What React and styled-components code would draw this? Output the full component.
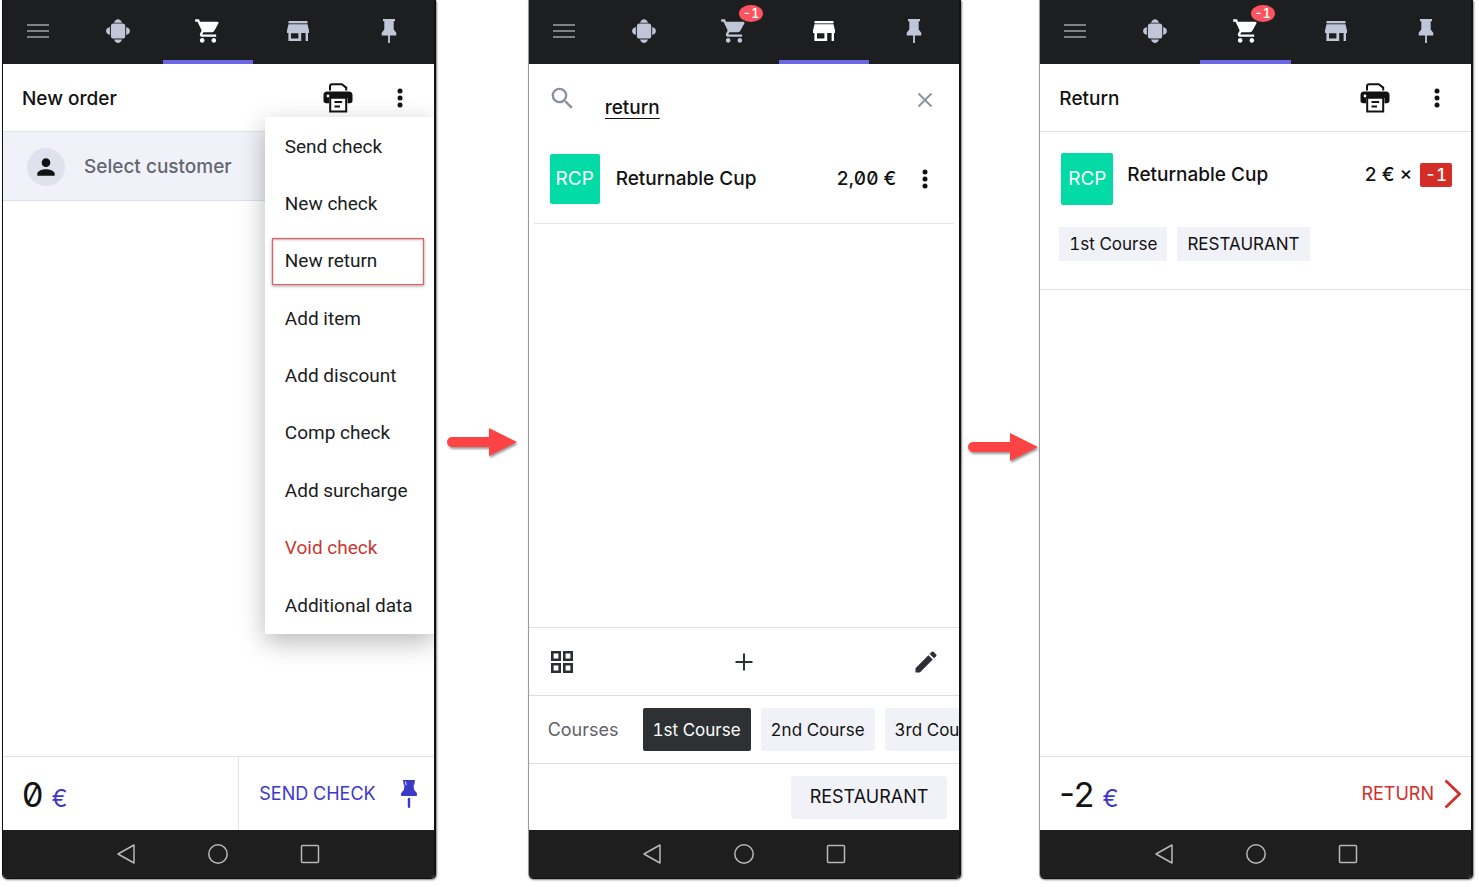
import React from 'react';
import styled, { createGlobalStyle, css } from 'styled-components'
import { MdShoppingCart, MdPerson, MdSearch, MdEdit } from 'react-icons/md'

const GlobalStyle = createGlobalStyle`
    * {
        box-sizing: border-box;
    }
    body {
        margin: 0;
        background: #fff;
        color: #121212;
        font-family: Inter, "Liberation Sans", sans-serif;
        font-size: 19px;
        font-weight: 500;
        line-height: 24px;
        font-feature-settings: "zero", "tnum";
    }
    button, input {
        font: inherit;
        font-feature-settings: inherit;
        color: inherit;
        border: 0;
        padding: 0;
        background: none;
    }
`

/* ---------- icons ---------- */

const TableIcon = () => (
    <svg width="24" height="24" viewBox="0 0 24 24" fill="currentColor" aria-hidden="true">
        <rect x="4.900" y="4.600" width="14.300" height="15" rx="2.600" />
        <path d="M8 3.700C8.800 1.400 10.200.2 12 .2s3.200 1.200 4 3.500z" />
        <path d="M8 20.500c.8 2.300 2.200 3.400 4 3.400s3.200-1.100 4-3.400z" />
        <path d="M3.900 8C1.300 8.700.1 10.200.1 12s1.200 3.300 3.800 4z" />
        <path d="M20.200 8c2.500.7 3.700 2.200 3.700 4s-1.200 3.300-3.700 4z" />
    </svg>
)

const StoreIcon = () => (
    <svg width="22" height="20" viewBox="0 0 22 20" fill="currentColor" aria-hidden="true">
        <path d="M1.500 0h19v2.400h-19z" />
        <path fillRule="evenodd" d="M1.500 3.200h19L22 9.500v2.500h-1v8h-2.400v-8h-4.400v8H1.400v-8H0V9.500zM4 12.200v5.200h7.400v-5.200z" />
    </svg>
)

const PinIcon = () => (
    <svg width="16" height="24" viewBox="0 0 16 24" fill="currentColor" aria-hidden="true">
        <path d="M2 0h12v2.200h-1.300v8.300l2.600 3.200v2.700H8.900V24H7.100v-7.600H.7v-2.700l2.600-3.200V2.200H2z" />
    </svg>
)

const SendPinIcon = () => (
    <svg width="16" height="28" viewBox="0 0 16 28" aria-hidden="true">
        <path d="M2.500 0h11c.4 0 .6.300.5.700l-.6 3.600c-.1.500-.4.800-.8 1l.5 4.500 2.300 2.700c.4.500.6 1.100.6 1.800v.6c0 .6-.4 1-1 1H1c-.6 0-1-.4-1-1v-.6c0-.7.200-1.300.6-1.800l2.300-2.700.5-4.500c-.4-.2-.7-.5-.8-1L2 .7C1.900.3 2.100 0 2.500 0z" fill="currentColor" />
        <path d="M4.400 1.600l.8 3.600" stroke="#fff" strokeWidth=".9" fill="none" />
        <path d="M8 19v7.800" stroke="currentColor" strokeWidth="2.400" strokeLinecap="round" />
    </svg>
)

const PrinterIcon = () => (
    <svg width="30" height="30" viewBox="0 0 30 30" aria-hidden="true">
        <path d="M7 7.500V3.500C7 2 7.800 1.200 9.200 1.200h9.600L23.200 4.600v2.900" fill="none" stroke="currentColor" strokeWidth="2" />
        <path d="M4 8.600h22c2.200 0 3.500 1.400 3.500 3.500v5.400c0 1.800-1 2.700-2.700 2.700h-2.300V15H6v5.200H3.200C1.500 20.200.5 19.300.5 17.500v-5.400C.5 10 1.800 8.600 4 8.600z" fill="currentColor" />
        <circle cx="5" cy="13" r="1.400" fill="#fff" />
        <path d="M7.200 14.800h16v13.800h-16z" fill="#fff" stroke="currentColor" strokeWidth="2" />
        <path d="M11.500 19h7.600M11.500 23.500h5.500" stroke="currentColor" strokeWidth="1.800" />
    </svg>
)

const DotsIcon = () => (
    <svg width="6" height="20" viewBox="0 0 6 20" fill="currentColor" aria-hidden="true">
        <circle cx="3" cy="3" r="2.500" />
        <circle cx="3" cy="10" r="2.500" />
        <circle cx="3" cy="17" r="2.500" />
    </svg>
)

const MenuIcon = () => (
    <svg width="22" height="16" viewBox="0 0 22 16" stroke="currentColor" strokeWidth="2" aria-hidden="true">
        <path d="M0 2h22M0 8h22M0 14h22" />
    </svg>
)

const CloseIcon = () => (
    <svg width="16" height="16" viewBox="0 0 16 16" stroke="currentColor" strokeWidth="1.800" aria-hidden="true">
        <path d="M1.500 1.500l13 13M14.500 1.500l-13 13" />
    </svg>
)

const GridIcon = () => (
    <svg width="22" height="22" viewBox="0 0 22 22" fill="none" stroke="currentColor" strokeWidth="2.600" aria-hidden="true">
        <path d="M1.300 1.300h7.400v7.400H1.300zM13.300 1.300h7.400v7.400h-7.400zM1.300 13.300h7.400v7.400H1.300zM13.300 13.300h7.400v7.400h-7.400z" />
    </svg>
)

const PlusIcon = () => (
    <svg width="18" height="18" viewBox="0 0 18 18" stroke="currentColor" strokeWidth="2" aria-hidden="true">
        <path d="M9 .5v17M.5 9h17" />
    </svg>
)

const ChevronIcon = () => (
    <svg width="18" height="30" viewBox="0 0 18 30" fill="none" stroke="currentColor" strokeWidth="2.800" aria-hidden="true">
        <path d="M1.500 1.500L15.500 15l-14 13.500" />
    </svg>
)

const BackIcon = () => (
    <svg width="20" height="20" viewBox="0 0 20 20" fill="none" stroke="currentColor" strokeWidth="1.500" strokeLinejoin="round" aria-hidden="true">
        <path d="M18 1v18L2 10z" />
    </svg>
)

const HomeIcon = () => (
    <svg width="20" height="20" viewBox="0 0 20 20" fill="none" stroke="currentColor" strokeWidth="1.500" aria-hidden="true">
        <circle cx="10" cy="10" r="9.200" />
    </svg>
)

const RecentIcon = () => (
    <svg width="20" height="20" viewBox="0 0 20 20" fill="none" stroke="currentColor" strokeWidth="1.500" aria-hidden="true">
        <rect x="1.500" y="1.500" width="17" height="17" rx="1" />
    </svg>
)

const ArrowIcon = () => (
    <svg width="72" height="32" viewBox="0 0 72 32" fill="#fd4343" aria-hidden="true">
        <path d="M6 11h37V2l28 14-28 14v-9H6a5 5 0 0 1 0-10z" />
    </svg>
)

/* ---------- shared parts ---------- */

const TopNav = ({ active, count }) => {
    const tabs = [
        { id: 'tables', label: 'Tables', icon: <TableIcon /> },
        { id: 'cart', label: 'Cart', icon: <MdShoppingCart size={28} /> },
        { id: 'store', label: 'Store', icon: <StoreIcon /> },
        { id: 'pins', label: 'Pinned', icon: <PinIcon /> },
    ]

    return (
        <Nav>
            <MenuButton aria-label="Menu"><MenuIcon /></MenuButton>
            {tabs.map(tab => (
                <Tab key={tab.id} aria-label={tab.label} $active={tab.id === active}>
                    {tab.icon}
                    {tab.id === 'cart' && count && <CartCount>{count}</CartCount>}
                </Tab>
            ))}
        </Nav>
    )
}

const SystemBar = () => (
    <SystemNav>
        <SystemButton aria-label="Back"><BackIcon /></SystemButton>
        <SystemButton aria-label="Home"><HomeIcon /></SystemButton>
        <SystemButton aria-label="Recent apps"><RecentIcon /></SystemButton>
    </SystemNav>
)

const TitleBar = ({ title }) => (
    <Header>
        <Title>{title}</Title>
        <IconButton aria-label="Print"><PrinterIcon /></IconButton>
        <MoreButton aria-label="More"><DotsIcon /></MoreButton>
    </Header>
)

const menuItems = [
    { text: 'Send check' },
    { text: 'New check' },
    { text: 'New return', marked: true },
    { text: 'Add item' },
    { text: 'Add discount' },
    { text: 'Comp check' },
    { text: 'Add surcharge' },
    { text: 'Void check', danger: true },
    { text: 'Additional data' },
]

const courses = ['1st Course', '2nd Course', '3rd Course']

/* ---------- screens ---------- */

const OrderScreen = () => (
    <Phone>
        <TopNav active="cart" />
        <TitleBar title="New order" />
        <Customer>
            <Avatar><MdPerson size={26} /></Avatar>
            Select customer
        </Customer>
        <Content />
        <Menu>
            {menuItems.map(item => (
                <MenuItem key={item.text} $danger={item.danger} $marked={item.marked}>{item.text}</MenuItem>
            ))}
        </Menu>
        <Footer>
            <Total>0 <Currency>€</Currency></Total>
            <SendButton>SEND CHECK <SendPinIcon /></SendButton>
        </Footer>
        <SystemBar />
    </Phone>
)

const SearchScreen = () => (
    <Phone $light>
        <TopNav active="store" count="-1" />
        <SearchBar>
            <SearchLabel htmlFor="search" aria-label="Search"><MdSearch size={29} /></SearchLabel>
            <SearchInput id="search" type="text" defaultValue="return" />
            <ClearButton aria-label="Clear"><CloseIcon /></ClearButton>
        </SearchBar>
        <Product>
            <Thumb>RCP</Thumb>
            <ProductName>Returnable Cup</ProductName>
            <Price>2,00 €</Price>
            <MoreButton aria-label="More"><DotsIcon /></MoreButton>
        </Product>
        <Content />
        <Toolbar>
            <ToolButton aria-label="Grid"><GridIcon /></ToolButton>
            <ToolButton aria-label="Add"><PlusIcon /></ToolButton>
            <ToolButton aria-label="Edit"><MdEdit size={28} /></ToolButton>
        </Toolbar>
        <Courses>
            <CoursesLabel>Courses</CoursesLabel>
            {courses.map((course, i) => (
                <CourseButton key={course} $selected={i === 0}>{course}</CourseButton>
            ))}
        </Courses>
        <Places>
            <PlaceButton>RESTAURANT</PlaceButton>
        </Places>
        <SystemBar />
    </Phone>
)

const ReturnScreen = () => (
    <Phone $light>
        <TopNav active="cart" count="-1" />
        <TitleBar title="Return" />
        <OrderItem>
            <OrderLine>
                <Thumb $large>RCP</Thumb>
                <ProductName>Returnable Cup</ProductName>
                <Price>2 € ×</Price>
                <Quantity>-1</Quantity>
            </OrderLine>
            <Tags>
                <Tag>1st Course</Tag>
                <Tag>RESTAURANT</Tag>
            </Tags>
        </OrderItem>
        <Content />
        <Footer>
            <Total>-2 <Currency>€</Currency></Total>
            <ReturnButton>RETURN <ChevronIcon /></ReturnButton>
        </Footer>
        <SystemBar />
    </Phone>
)

const App = () => (
    <>
        <GlobalStyle />
        <Page>
            <OrderScreen />
            <Step><ArrowIcon /></Step>
            <SearchScreen />
            <Step $low><ArrowIcon /></Step>
            <ReturnScreen />
        </Page>
    </>
)

export default App

const Page = styled.main`
    display: grid;
    grid-template-columns: 1fr 92px 1fr 78px 1fr;
    min-height: 100vh;
    padding: 0 6px 8px 2px;
`

const Step = styled.div`
    display: flex;
    align-items: center;
    justify-content: ${props => props.$low ? 'flex-end' : 'center'};
    padding-top: ${props => props.$low ? '14px' : '4px'};

    svg {
        flex: none;
        filter: drop-shadow(1px 2px 1px rgba(0, 0, 0, 0.4));
    }
`

const Phone = styled.section`
    position: relative;
    display: flex;
    flex-direction: column;
    min-width: 0;
    overflow: hidden;
    background: #fff;
    border: solid #111;
    border-width: 0 2px 1px 1px;
    border-left-color: ${props => props.$light ? '#9a9a9a' : '#111'};
    border-radius: 0 0 5px 5px;
    box-shadow: 1px 1px 2px rgba(0, 0, 0, 0.5);
`

const Nav = styled.nav`
    display: grid;
    grid-template-columns: 70px repeat(4, 1fr);
    height: 64px;
    background: #1c1e1f;
`

const Tab = styled.button`
    position: relative;
    display: flex;
    align-items: center;
    justify-content: center;
    padding-top: 2px;
    border-bottom: 4px solid ${props => props.$active ? '#6b66e3' : 'transparent'};
    color: ${props => props.$active ? '#fff' : '#c0c6d8'};
`

const MenuButton = styled(Tab)`
    color: #7d8183;
`

const CartCount = styled.span`
    position: absolute;
    top: 5px;
    left: 50%;
    width: 24px;
    margin-left: 5px;
    border-radius: 50%;
    background: #fb5360;
    color: #fff;
    font-size: 13px;
    line-height: 17px;
    text-align: center;
`

const Header = styled.header`
    display: flex;
    align-items: center;
    height: 68px;
    padding: 0 19px;
    border-bottom: 1px solid #e0e1e6;
`

const Title = styled.h1`
    flex: 1;
    margin: 0;
    padding-top: 2px;
    font-size: 19px;
    font-weight: 500;
`

const IconButton = styled.button`
    display: flex;
    align-items: center;
    justify-content: center;
`

const MoreButton = styled(IconButton)`
    width: 30px;
    height: 30px;

    ${Header} & {
        margin-left: 32px;
    }
`

const Customer = styled.button`
    display: flex;
    align-items: center;
    gap: 19px;
    height: 69px;
    padding: 1px 24px 0;
    border-bottom: 1px solid #dcdeea;
    background: #f1f2f9;
    color: #63676e;
    text-align: left;
`

const Avatar = styled.span`
    display: flex;
    align-items: center;
    justify-content: center;
    width: 38px;
    height: 38px;
    border-radius: 50%;
    background: #dfe1ec;
    color: #121212;
`

const Content = styled.div`
    flex: 1;
`

const Menu = styled.div`
    position: absolute;
    top: 117px;
    right: 0;
    display: flex;
    flex-direction: column;
    justify-content: space-between;
    min-height: 517px;
    padding: 6px 10px 5px 7px;
    background: #fff;
    box-shadow: 0 8px 24px rgba(0, 0, 0, 0.28);
`

const MenuItem = styled.button`
    height: 47px;
    padding: 0 10px 0 12px;
    border: 1px solid transparent;
    color: #1a1c1d;
    font-family: Roboto, sans-serif;
    font-weight: 400;
    text-align: left;

    ${props => props.$danger && css`
        color: #cb3732;
    `}

    ${props => props.$marked && css`
        border-color: #ef5a60;
        box-shadow: 0 1px 3px rgba(0, 0, 0, 0.4), inset 0 1px 2px rgba(0, 0, 0, 0.3);
    `}
`

const Footer = styled.footer`
    display: flex;
    height: 74px;
    border-top: 1px solid #e2e2e4;
`

const Total = styled.div`
    flex: 1;
    display: flex;
    align-items: baseline;
    gap: 8px;
    padding: 20px 19px 0;
    font-size: 34px;
    font-weight: 400;
    line-height: 36px;
    font-feature-settings: "zero";
`

const Currency = styled.span`
    color: #3d39c8;
    font-size: 24px;
`

const SendButton = styled.button`
    display: flex;
    align-items: center;
    gap: 25px;
    padding: 0 17px 0 20px;
    border-left: 1px solid #e2e2e4;
    color: #3d39c8;
    font-size: 18px;
    font-weight: 400;
`

const ReturnButton = styled(SendButton)`
    gap: 10px;
    padding: 0 9px 0 20px;
    border-left: 0;
    color: #d32e29;
`

const SystemNav = styled.nav`
    display: flex;
    align-items: center;
    justify-content: center;
    gap: 72px;
    height: 48px;
    background: #1e1e1e;
    color: #b8b8b8;
`

const SystemButton = styled.button`
    display: flex;
`

const SearchBar = styled.div`
    display: flex;
    align-items: flex-start;
    height: 71px;
    padding: 20px 20px 0 19px;
    color: #8b91a0;
`

const SearchLabel = styled.label`
    display: flex;
`

const SearchInput = styled.input`
    flex: 1;
    min-width: 0;
    margin: 12px 20px 0 28px;
    color: #121212;
    text-decoration: underline;
    text-decoration-thickness: 1px;
    text-underline-offset: 4px;
    outline: 0;
`

const ClearButton = styled(IconButton)`
    width: 28px;
    height: 32px;
`

const Product = styled.div`
    display: flex;
    align-items: center;
    height: 89px;
    margin: 0 5px;
    padding: 0 14px 0 16px;
    border-bottom: 1px solid #e3e3ec;
`

const Thumb = styled.div`
    display: flex;
    align-items: center;
    justify-content: center;
    width: ${props => props.$large ? '52px' : '50px'};
    height: ${props => props.$large ? '52px' : '50px'};
    border-radius: 2px;
    background: #02dba5;
    color: #fff;
    font-weight: 400;
`

const ProductName = styled.div`
    flex: 1;
    margin-left: 16px;
`

const Price = styled.div`
    margin-right: 14px;
`

const Toolbar = styled.div`
    display: flex;
    align-items: center;
    justify-content: space-between;
    height: 68px;
    padding: 0 19px;
    border-top: 1px solid #e2e2e6;
    color: #2c2f33;
`

const ToolButton = styled(IconButton)`
    width: 28px;
    height: 28px;
`

const Courses = styled.div`
    display: flex;
    align-items: center;
    gap: 10px;
    height: 68px;
    padding-left: 19px;
    overflow-x: auto;
    scrollbar-width: none;
    border-top: 1px solid #dcdce0;
    font-size: 17px;
    font-weight: 400;
`

const CoursesLabel = styled.span`
    margin-right: 14px;
    color: #5f6269;
    font-size: 18px;
`

const CourseButton = styled.button`
    flex: none;
    height: 43px;
    padding: 0 10px;
    border-radius: 2px;
    background: ${props => props.$selected ? '#2d3134' : '#f1f1f8'};
    color: ${props => props.$selected ? '#fff' : '#121212'};
`

const Places = styled.div`
    display: flex;
    align-items: center;
    justify-content: flex-end;
    height: 67px;
    padding: 0 12px;
    border-top: 1px solid #dcdce0;
`

const PlaceButton = styled.button`
    height: 43px;
    padding: 0 19px;
    border-radius: 4px;
    background: #f1f1f8;
    font-size: 18px;
    font-weight: 400;
`

const OrderItem = styled.article`
    padding: 21px 19px 28px;
    border-bottom: 1px solid #e0e0e4;
`

const OrderLine = styled.div`
    display: flex;
    align-items: flex-start;
    padding-left: 2px;

    ${Thumb} {
        flex: none;
    }

    ${ProductName}, ${Price} {
        margin-top: 10px;
    }

    ${ProductName} {
        margin-left: 14px;
    }

    ${Price} {
        margin-right: 8px;
    }
`

const Quantity = styled.span`
    width: 32px;
    margin-top: 10px;
    border-radius: 2px;
    background: #d42d28;
    color: #fff;
    font-size: 17px;
    text-align: center;
`

const Tags = styled.div`
    display: flex;
    gap: 10px;
    margin-top: 22px;
`

const Tag = styled.span`
    padding: 5px 10px;
    background: #f1f1f8;
    font-size: 17px;
    font-weight: 400;
`
